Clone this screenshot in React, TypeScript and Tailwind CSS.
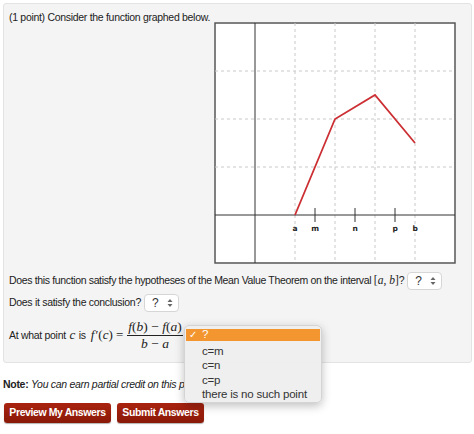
import React from "react"

const sans = { fontFamily: '"Liberation Sans", Arial, sans-serif' }
const serif = { fontFamily: '"Liberation Serif", "Times New Roman", serif' }

function Graph() {
  const vx = [80, 120, 160, 200]
  const hy = [48, 96, 144]
  return (
    <svg width="242" height="242" viewBox="-1 -1 242 242" className="block bg-white">
      <rect x="0" y="0" width="240" height="240" fill="#fff" stroke="#555" strokeWidth="1.5" />
      {vx.map((x) => (
        <line key={x} x1={x} y1="0" x2={x} y2="240" stroke="#c9c9c9" strokeDasharray="3 3" />
      ))}
      {hy.map((y) => (
        <line key={y} x1="0" y1={y} x2="240" y2={y} stroke="#c9c9c9" strokeDasharray="3 3" />
      ))}
      <line x1="40" y1="0" x2="40" y2="240" stroke="#333" strokeWidth="1" />
      <line x1="0" y1="192" x2="240" y2="192" stroke="#333" strokeWidth="1" />
      {[100, 140, 180].map((x) => (
        <line key={x} x1={x} y1="185" x2={x} y2="199" stroke="#333" strokeWidth="1" />
      ))}
      <polyline points="80,192 120,96 160,72 200,120" fill="none" stroke="#cc2f33" strokeWidth="1.8" />
      {[
        ["a", 80],
        ["m", 100],
        ["n", 140],
        ["p", 180],
        ["b", 200],
      ].map(([t, x]) => (
        <text key={t} x={x} y="208" fontSize="7.5" fontWeight="bold" textAnchor="middle" fill="#222" fontFamily="DejaVu Sans, sans-serif">
          {t}
        </text>
      ))}
    </svg>
  )
}

function Select() {
  return (
    <span className="inline-flex items-center justify-between w-[35px] h-[18px] bg-white border border-[#d6d6d6] rounded-[4px] pl-[7px] pr-[5px] align-middle text-[#333]">
      <span className="text-[12px] leading-none">?</span>
      <svg width="6" height="10" viewBox="0 0 6 10">
        <path d="M3 1 L5.5 4 L0.5 4 Z" fill="#666" />
        <path d="M3 9 L5.5 6 L0.5 6 Z" fill="#666" />
      </svg>
    </span>
  )
}

export default function App() {
  return (
    <div className="relative w-[474px] h-[434px] bg-white text-[#222] text-[10.5px] tracking-[-0.3px]" style={sans}>
      <div className="pt-[3px] pl-[3px] pr-[2px]">
        <div className="h-[360px] bg-[#f4f4f4] border border-[#e3e3e3] rounded-[3px] pl-[5px]">
          <div className="flex items-start">
            <div className="mt-[6px] w-[205px] whitespace-nowrap">(1 point) Consider the function graphed below.</div>
            <div className="mt-[18px]">
              <Graph />
            </div>
          </div>
          <div className="mt-[7px] flex items-center h-[20px] whitespace-nowrap tracking-[-0.35px]">
            <span>
              Does this function satisfy the hypotheses of the Mean Value Theorem on the interval{" "}
              <span style={serif} className="text-[11.5px] tracking-normal">
                [<i>a</i>, <i>b</i>]
              </span>
              ?
            </span>
            <span className="ml-[3px]">
              <Select />
            </span>
          </div>
          <div className="mt-[2px] flex items-center h-[20px] whitespace-nowrap">
            <span>Does it satisfy the conclusion?</span>
            <span className="ml-[3px]">
              <Select />
            </span>
          </div>
          <div className="mt-[5px] flex items-center h-[34px] whitespace-nowrap">
            <span>
              At what point <i style={serif} className="text-[13px] tracking-normal mx-[1px]">c</i> is
            </span>
            <span style={serif} className="ml-[5px] text-[13px] tracking-normal">
              <i>f</i>
              <span className="ml-[1px]">′</span>(<i>c</i>) =
            </span>
            <span style={serif} className="ml-[4px] inline-flex flex-col items-center text-[13.5px] leading-[16px] tracking-normal">
              <span className="px-[1px] border-b border-[#222]">
                <i>f</i>(<i>b</i>) − <i>f</i>(<i>a</i>)
              </span>
              <span>
                <i>b</i> − <i>a</i>
              </span>
            </span>
          </div>
        </div>
      </div>
      <div className="mt-[14px] pl-[3px] w-[184px] overflow-hidden whitespace-nowrap">
        <b>Note:</b> <i>You can earn partial credit on this problem.</i>
      </div>
      <div className="mt-[10px] pl-[4px] flex gap-[6px]">
        <button className="h-[20px] w-[107px] whitespace-nowrap rounded-[3px] bg-gradient-to-b from-[#a9230f] to-[#8a1908] text-white text-[10.5px] font-bold tracking-[-0.4px] shadow-[0_1px_1px_rgba(0,0,0,0.3)]">
          Preview My Answers
        </button>
        <button className="h-[20px] w-[87px] whitespace-nowrap rounded-[3px] bg-gradient-to-b from-[#a9230f] to-[#8a1908] text-white text-[10.5px] font-bold tracking-[-0.4px] shadow-[0_1px_1px_rgba(0,0,0,0.3)]">
          Submit Answers
        </button>
      </div>
      <div className="absolute left-[184px] top-[325px] w-[138px] h-[78px] bg-[#eeeeee]/95 rounded-[5px] border border-[#d4d4d4] shadow-[0_3px_10px_rgba(0,0,0,0.25)] pt-[3px] px-[1px] text-[11.5px] tracking-[-0.2px] text-[#333] whitespace-nowrap">
        <div className="h-[12px] bg-[#f3962f] text-white flex items-center pl-[3px] leading-none">
          <span className="w-[13px] text-[10px]">✓</span>
          <span className="text-[11.5px]">?</span>
        </div>
        <div className="pl-[16px] leading-[14.3px] mt-[3px]">
          <div>c=m</div>
          <div>c=n</div>
          <div>c=p</div>
          <div>there is no such point</div>
        </div>
      </div>
    </div>
  )
}
